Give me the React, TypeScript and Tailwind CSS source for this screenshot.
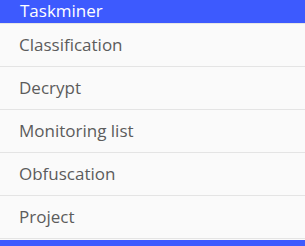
const items = ["Classification", "Decrypt", "Monitoring list", "Obfuscation", "Project"];

export default function App() {
  return (
    <div className="w-[305px] h-[246px] bg-[#fafafa] flex flex-col overflow-hidden" style={{ fontFamily: '"Open Sans", "Noto Sans", sans-serif' }}>
      <div className="h-[24px] bg-[#3d5afe] border-b border-[#e6e6e6] text-white text-[17px] leading-[22px] pl-5 shrink-0">Taskminer</div>
      <ul className="flex flex-col">
        {items.map((item) => (
          <li key={item} className="h-[43px] border-b border-[#e4e4e4] flex items-center pl-[19px] text-[17px] text-[#5c5c5c]">
            {item}
          </li>
        ))}
      </ul>
      <div className="mt-auto h-[6px] bg-[#3d5afe]" />
    </div>
  );
}
